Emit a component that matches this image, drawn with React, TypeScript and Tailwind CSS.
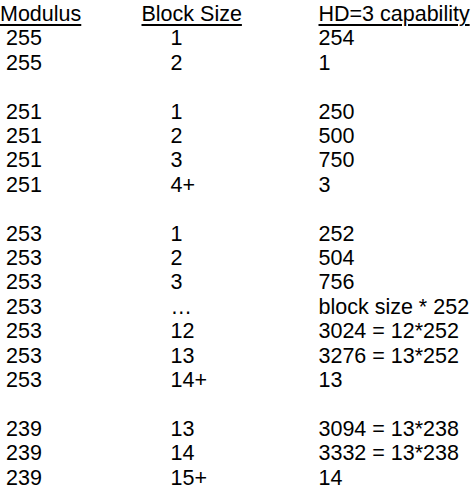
import React from "react";

type Row = [string, string, string] | null;

const rows: Row[] = [
  ["255", "1", "254"],
  ["255", "2", "1"],
  null,
  ["251", "1", "250"],
  ["251", "2", "500"],
  ["251", "3", "750"],
  ["251", "4+", "3"],
  null,
  ["253", "1", "252"],
  ["253", "2", "504"],
  ["253", "3", "756"],
  ["253", "…", "block size * 252"],
  ["253", "12", "3024 = 12*252"],
  ["253", "13", "3276 = 13*252"],
  ["253", "14+", "13"],
  null,
  ["239", "13", "3094 = 13*238"],
  ["239", "14", "3332 = 13*238"],
  ["239", "15+", "14"],
];

export default function App() {
  return (
    <div
      className="w-[474px] h-[490px] overflow-hidden bg-white text-black pt-[2px]"
      style={{ fontFamily: '"Liberation Sans", Arial, sans-serif' }}
    >
      <div className="grid grid-cols-[141.5px_177px_1fr] text-[21.5px] leading-[24.4px] whitespace-nowrap">
        <div className="underline decoration-[1.5px] underline-offset-[3px]">Modulus</div>
        <div className="underline decoration-[1.5px] underline-offset-[3px]">Block Size</div>
        <div className="underline decoration-[1.5px] underline-offset-[3px]">HD=3 capability</div>
        {rows.map((r, i) =>
          r === null ? (
            <div key={i} className="col-span-3 h-[24.4px]" />
          ) : (
            <React.Fragment key={i}>
              <div className="pl-[6px]">{r[0]}</div>
              <div className="pl-[29px]">{r[1]}</div>
              <div>{r[2]}</div>
            </React.Fragment>
          )
        )}
      </div>
    </div>
  );
}
